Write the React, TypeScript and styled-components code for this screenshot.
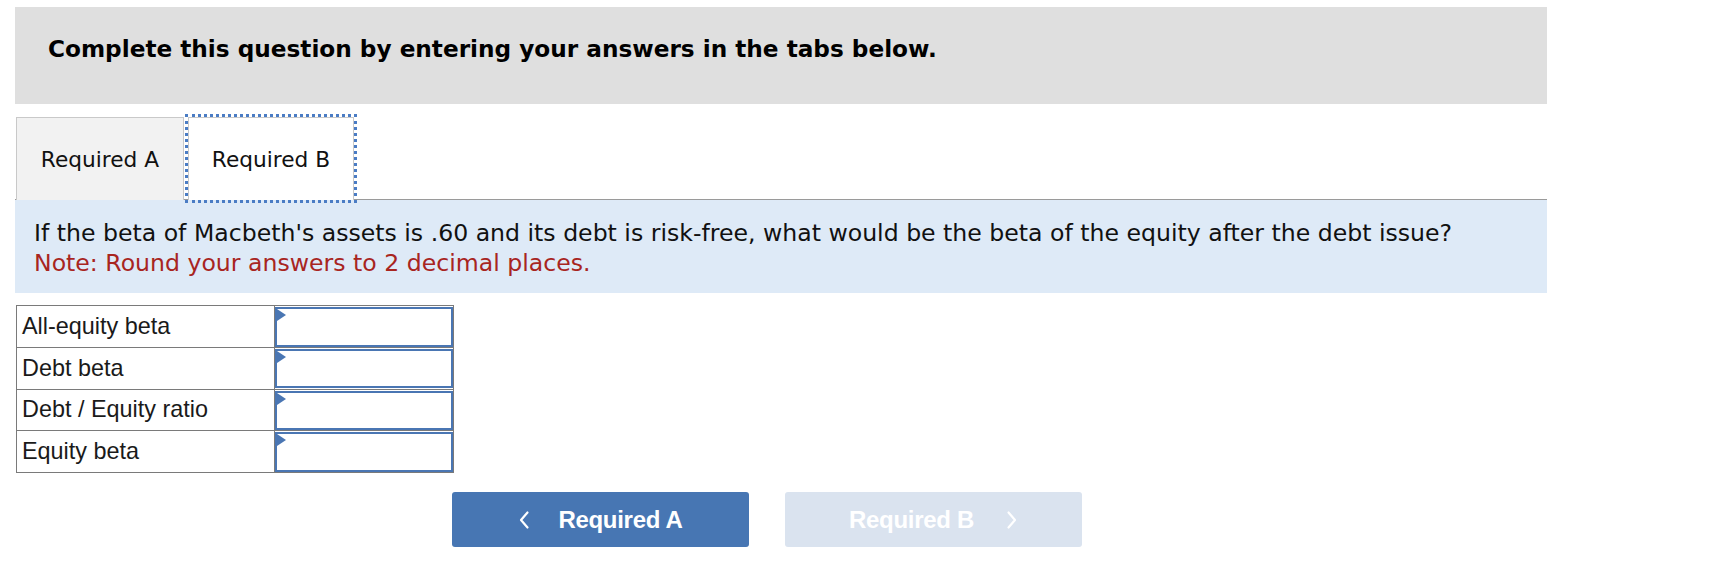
import React, { useState } from "react";
import styled, { createGlobalStyle } from "styled-components";

const GlobalStyle = createGlobalStyle`
  html, body {
    margin: 0;
    padding: 0;
    background: #ffffff;
  }
`;

const rows = [
  "All-equity beta",
  "Debt beta",
  "Debt / Equity ratio",
  "Equity beta",
];

const Chevron = ({ dir }: { dir: "left" | "right" }) => (
  <svg width="12" height="20" viewBox="0 0 12 20" aria-hidden="true">
    <polyline
      points={dir === "left" ? "9.5,2.5 3,10 9.5,17.5" : "2.5,2.5 9,10 2.5,17.5"}
      fill="none"
      stroke="#ffffff"
      strokeWidth="2.2"
      strokeLinecap="round"
      strokeLinejoin="round"
    />
  </svg>
);

const App = () => {
  const [active, setActive] = useState("B");
  const [values, setValues] = useState<string[]>(["", "", "", ""]);

  const handleChange = (i: number, v: string) => {
    const next = [...values];
    next[i] = v;
    setValues(next);
  };

  return (
    <Page>
      <GlobalStyle />
      <Header>
        <Heading>
          Complete this question by entering your answers in the tabs below.
        </Heading>
      </Header>

      <TabBar>
        <Tab $active={active === "A"} onClick={() => setActive("A")}>
          Required A
        </Tab>
        <Tab $active={active === "B"} onClick={() => setActive("B")}>
          Required B
        </Tab>
      </TabBar>

      <Panel>
        <Question>
          If the beta of Macbeth's assets is .60 and its debt is risk-free,
          what would be the beta of the equity after the debt issue?
        </Question>
        <Note>Note: Round your answers to 2 decimal places.</Note>
      </Panel>

      <AnswerTable>
        <tbody>
          {rows.map((label, i) => (
            <tr key={label}>
              <LabelCell>{label}</LabelCell>
              <InputCell>
                <InputBox>
                  <Flag />
                  <AnswerInput
                    value={values[i]}
                    onChange={(e) => handleChange(i, e.target.value)}
                  />
                </InputBox>
              </InputCell>
            </tr>
          ))}
        </tbody>
      </AnswerTable>

      <NavRow>
        <NavButton onClick={() => setActive("A")}>
          <Chevron dir="left" />
          <span>Required A</span>
        </NavButton>
        <NavButton $disabled>
          <span>Required B</span>
          <Chevron dir="right" />
        </NavButton>
      </NavRow>
    </Page>
  );
};

const Page = styled.div`
  width: 1532px;
  padding: 7px 0 0 15px;
`;

const Header = styled.div`
  height: 97px;
  background-color: #dfdfdf;
  padding: 28px 0 0 33px;
  box-sizing: border-box;
`;

const Heading = styled.h1`
  margin: 0;
  font-family: "DejaVu Sans", Verdana, sans-serif;
  font-weight: bold;
  font-size: 23.2px;
  line-height: 28px;
  color: #000000;
`;

const TabBar = styled.div`
  display: flex;
  gap: 4px;
  margin-top: 13px;
  padding-left: 1px;
  border-bottom: 1px solid #9a9a9a;
`;

const Tab = styled.div<{ $active?: boolean }>`
  display: flex;
  align-items: center;
  justify-content: center;
  box-sizing: border-box;
  height: 83px;
  width: ${(p) => (p.$active ? "166px" : "168px")};
  margin-bottom: -1px;
  font-family: "DejaVu Sans", Tahoma, sans-serif;
  font-size: 21.7px;
  color: #111111;
  cursor: pointer;
  border: 1px solid #c9c9c9;
  border-bottom: none;
  background-color: ${(p) => (p.$active ? "#ffffff" : "#f2f2f2")};
  outline: ${(p) => (p.$active ? "3px dotted #4a7cc4" : "none")};
  outline-offset: 0;
  position: relative;
  z-index: ${(p) => (p.$active ? 1 : 0)};
`;

const Panel = styled.div`
  background-color: #deeaf7;
  padding: 18px 18px 15px 19px;
`;

const Question = styled.p`
  margin: 0;
  font-family: "DejaVu Sans", Tahoma, sans-serif;
  font-size: 23.6px;
  line-height: 30px;
  color: #111111;
`;

const Note = styled(Question)`
  color: #a8251f;
`;

const AnswerTable = styled.table`
  margin-top: 12px;
  margin-left: 1px;
  border-collapse: collapse;
  width: 438px;
`;

const LabelCell = styled.td`
  width: 258px;
  height: 41.8px;
  box-sizing: border-box;
  padding: 0 0 0 5px;
  border: 1px solid #7a7a7a;
  font-family: "Liberation Sans", Arial, sans-serif;
  font-size: 23.4px;
  color: #1a1a1a;
  vertical-align: middle;
`;

const InputCell = styled.td`
  padding: 0;
  height: 41.8px;
  box-sizing: border-box;
  border: 1px solid #7a7a7a;
  border-left: none;
  vertical-align: top;
`;

const InputBox = styled.div`
  position: relative;
  box-sizing: border-box;
  height: 39.5px;
  margin-top: 1px;
  border: 2px solid #4a76b3;
  background: #ffffff;
`;

const Flag = styled.span`
  position: absolute;
  top: 0;
  left: 0;
  width: 0;
  height: 0;
  border-top: 6px solid transparent;
  border-bottom: 6px solid transparent;
  border-left: 9px solid #4a76b3;
`;

const AnswerInput = styled.input`
  width: 100%;
  height: 100%;
  box-sizing: border-box;
  border: none;
  outline: none;
  padding: 0 8px;
  font-family: "Liberation Sans", Arial, sans-serif;
  font-size: 20px;
  text-align: right;
  background: transparent;
`;

const NavRow = styled.div`
  display: flex;
  gap: 36px;
  margin-top: 19px;
  padding-left: 437px;
`;

const NavButton = styled.button<{ $disabled?: boolean }>`
  display: flex;
  align-items: center;
  justify-content: center;
  gap: ${(p) => (p.$disabled ? "32px" : "28px")};
  width: 297px;
  height: 55px;
  border: none;
  border-radius: 3px;
  font-family: "Liberation Sans", Arial, sans-serif;
  font-weight: bold;
  font-size: 24px;
  letter-spacing: -0.3px;
  color: #ffffff;
  cursor: ${(p) => (p.$disabled ? "default" : "pointer")};
  background-color: ${(p) => (p.$disabled ? "#dae3ef" : "#4776b3")};
`;

export default App;
